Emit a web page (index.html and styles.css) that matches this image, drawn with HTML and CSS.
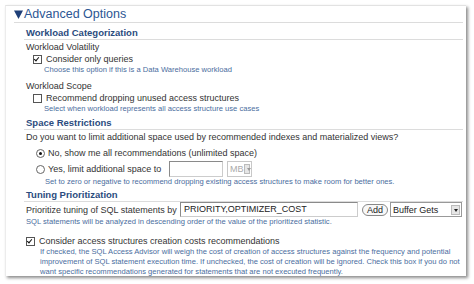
FILE: index.html
```html
<!DOCTYPE html>
<html>
<head>
<meta charset="utf-8">
<link rel="stylesheet" href="styles.css">
</head>
<body>
<div class="panel">
  <div class="hdr"><svg class="tri" width="9" height="9" viewBox="0 0 9 9"><polygon points="0,0.5 9,0.5 4.5,9" fill="#1f3f78"/></svg><span class="hdr-text">Advanced Options</span></div>
  <div class="body">
    <div class="sec">Workload Categorization</div>
    <div class="lbl l1">Workload Volatility</div>
    <div class="opt o1"><span class="cb on"></span><span>Consider only queries</span></div>
    <div class="help h1">Choose this option if this is a Data Warehouse workload</div>
    <div class="lbl l2">Workload Scope</div>
    <div class="opt o2"><span class="cb"></span><span>Recommend dropping unused access structures</span></div>
    <div class="help h1">Select when workload represents all access structure use cases</div>

    <div class="sec s2">Space Restrictions</div>
    <div class="lbl">Do you want to limit additional space used by recommended indexes and materialized views?</div>
    <div class="opt o3"><span class="rb on"></span><span>No, show me all recommendations (unlimited space)</span></div>
    <div class="opt o4"><span class="rb"></span><span class="ytxt">Yes, limit additional space to</span><span class="inp small"></span><span class="sel dis"><span class="seltxt">MB</span><span class="arr"></span></span></div>
    <div class="help h2">Set to zero or negative to recommend dropping existing access structures to make room for better ones.</div>

    <div class="sec s3">Tuning Prioritization</div>
    <div class="row">
      <span class="ptxt">Prioritize tuning of SQL statements by</span>
      <span class="inp big">PRIORITY,OPTIMIZER_COST</span>
      <span class="btn">Add</span>
      <span class="sel bg"><span class="seltxt">Buffer Gets</span><span class="arr"></span></span>
    </div>
    <div class="help h3">SQL statements will be analyzed in descending order of the value of the prioritized statistic.</div>

    <div class="opt o5"><span class="cb on"></span><span>Consider access structures creation costs recommendations</span></div>
    <div class="help para">If checked, the SQL Access Advisor will weigh the cost of creation of access structures against the frequency and potential improvement of SQL statement execution time. If unchecked, the cost of creation will be ignored. Check this box if you do not want specific recommendations generated for statements that are not executed frequently.</div>
  </div>
</div>
</body>
</html>
```

FILE: styles.css
```css
html, body {
  margin: 0;
  padding: 0;
  background: #ffffff;
}
body {
  font-family: "Liberation Sans", Arial, sans-serif;
  color: #333;
  width: 474px;
  height: 284px;
  overflow: hidden;
}
.panel {
  margin: 5px 0 0 5px;
  width: 461px;
  height: 271px;
  background: #fff;
  border-top: 1px solid #e2e2e2;
  border-left: 1px solid #ececec;
  box-shadow: 2px 2px 3px rgba(0,0,0,0.45);
  box-sizing: border-box;
  overflow: hidden;
}
.hdr {
  height: 16px;
  margin-left: 8px;
  margin-right: 3px;
  border-bottom: 1px solid #dcdcdc;
  display: flex;
  align-items: center;
  color: #2c5693;
}
.tri {
  flex: none;
  margin-right: 1px;
  margin-top: 1px;
}
.hdr-text {
  font-size: 12.5px;
  line-height: 16px;
}
.body {
  padding-left: 20px;
  padding-right: 3px;
}
.sec {
  font-weight: bold;
  color: #2b4c7e;
  font-size: 9.5px;
  line-height: 12px;
  margin-top: 4px;
  border-bottom: 1px solid #dcdcdc;
  margin-left: -2px;
  padding-left: 2px;
}
.s2 { margin-top: 3px; }
.s3 { margin-top: 2px; }
.lbl {
  font-size: 9px;
  line-height: 12px;
  margin-top: 1px;
}
.l1 { margin-top: 1px; }
.l2 { margin-top: 5px; }
.opt {
  display: flex;
  align-items: center;
  font-size: 9px;
  line-height: 12px;
}
.o1, .o2 { margin-left: 7px; }
.o3 { margin-left: 10px; margin-top: 4px; }
.o4 { margin-left: 10px; margin-top: 2px; height: 16px; }
.o5 { margin-top: 8px; }
.cb {
  width: 7px;
  height: 7px;
  border: 1px solid #555;
  background: #fff;
  margin-right: 4px;
  position: relative;
  flex: none;
}
.cb.on::after {
  content: "";
  position: absolute;
  left: 1px;
  top: 0px;
  width: 2px;
  height: 4px;
  border: solid #111;
  border-width: 0 1.5px 1.5px 0;
  transform: rotate(40deg);
}
.rb {
  width: 7px;
  height: 7px;
  border-radius: 50%;
  border: 1px solid #666;
  margin-right: 3px;
  position: relative;
  flex: none;
  background: #fff;
}
.rb.on::after {
  content: "";
  position: absolute;
  left: 2px;
  top: 2px;
  width: 3px;
  height: 3px;
  border-radius: 50%;
  background: #111;
}
.help {
  font-size: 7.6px;
  line-height: 10px;
  color: #4a6d9e;
}
.h1 { margin-left: 18px; }
.h2 { margin-left: 19px; }
.para { margin-left: 14px; margin-right: 2px; }
.ytxt { width: 121px; }
.inp {
  display: inline-block;
  height: 14px;
  border: 1px solid #8a8a8a;
  border-right-color: #ccc;
  border-bottom-color: #ccc;
  background: #fff;
  box-sizing: border-box;
  font-size: 9px;
  line-height: 12px;
  padding-left: 3px;
  color: #222;
}
.inp.small { width: 54px; height: 16px; }
.sel {
  display: inline-flex;
  align-items: center;
  height: 14px;
  border: 1px solid #999;
  box-sizing: border-box;
  font-size: 9px;
  color: #222;
  background: #fff;
}
.sel.dis {
  width: 25px;
  height: 16px;
  margin-left: 4px;
  color: #aaa;
  border-color: #c8c8c8;
}
.seltxt {
  flex: 1;
  padding-left: 2px;
  line-height: 12px;
}
.arr {
  width: 9px;
  height: 10px;
  background: #e6e6e6;
  border: 1px solid #bbb;
  box-sizing: border-box;
  margin-right: 1px;
  position: relative;
}
.arr::after {
  content: "";
  position: absolute;
  left: 2px;
  top: 3px;
  border-left: 2px solid transparent;
  border-right: 2px solid transparent;
  border-top: 3px solid #222;
}
.dis .arr::after { border-top-color: #999; }
.row {
  display: flex;
  align-items: center;
  height: 15px;
  font-size: 9px;
  margin-top: 0px;
}
.ptxt { width: 154px; }
.inp.big { width: 178px; height: 15px; }
.btn {
  width: 26px;
  height: 12px;
  margin-left: 4px;
  border: 1px solid #888;
  border-radius: 6px;
  box-sizing: border-box;
  text-align: center;
  font-size: 9px;
  line-height: 10px;
  color: #222;
  background: #f8f8f8;
}
.sel.bg { width: 72px; height: 15px; margin-left: 2px; }
.h3 { margin-top: 0; }
```
